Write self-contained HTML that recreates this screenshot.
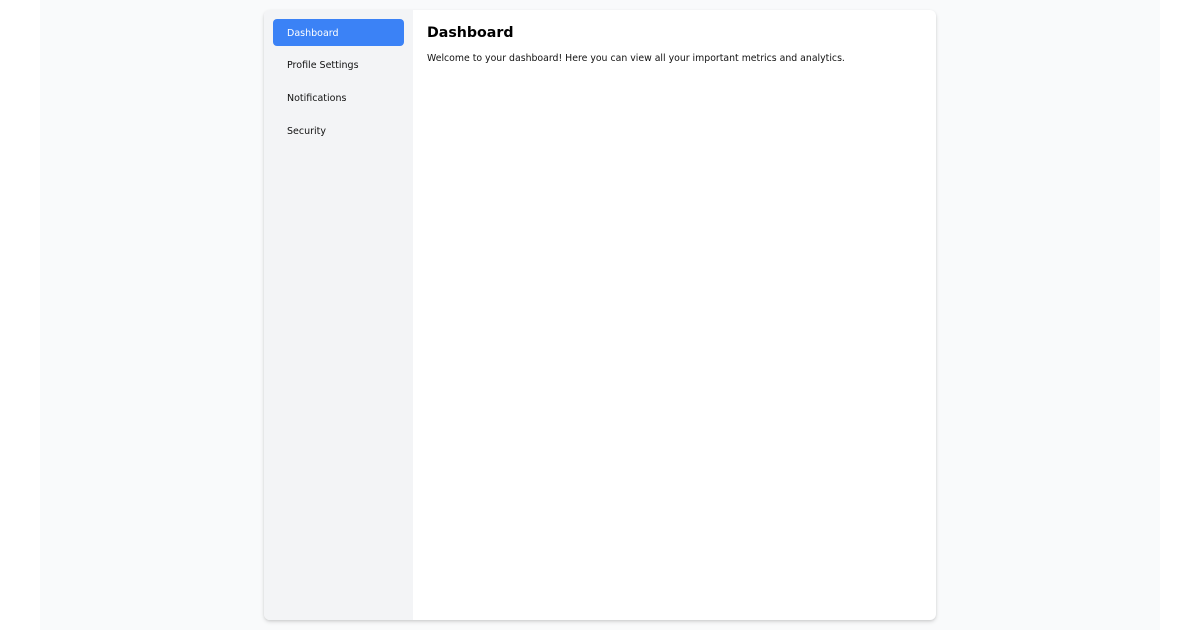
<!DOCTYPE html>
<html><head><meta charset="utf-8"><style>
html,body{margin:0;padding:0;background:#fff;width:1200px;height:630px;overflow:hidden;font-family:"DejaVu Sans","Liberation Sans",sans-serif;}
.bg{position:absolute;left:40px;top:0;width:1120px;height:630px;background:#f9fafb;}
.card{position:absolute;left:264px;top:10px;width:672px;height:610px;background:#fff;border-radius:6px;box-shadow:0 2px 4px rgba(0,0,0,0.12),0 1px 2px rgba(0,0,0,0.08);overflow:hidden;}
.side{position:absolute;left:0;top:0;width:149px;height:611px;background:#f3f4f6;}
.item{position:absolute;left:9px;width:131px;height:27px;line-height:29px;padding-left:14px;box-sizing:border-box;font-size:9.5px;color:#111;border-radius:4px;}
.active{background:#3b82f6;color:#fff;}
h1{position:absolute;left:163px;top:15px;margin:0;font-size:14.2px;font-weight:bold;color:#000;}
p{position:absolute;left:163px;top:43px;margin:0;font-size:9.35px;color:#111;}
</style></head><body>
<div class="bg"></div>
<div class="card">
<div class="side">
<div class="item active" style="top:9px">Dashboard</div>
<div class="item" style="top:41px">Profile Settings</div>
<div class="item" style="top:74px">Notifications</div>
<div class="item" style="top:107px">Security</div>
</div>
<h1>Dashboard</h1>
<p>Welcome to your dashboard! Here you can view all your important metrics and analytics.</p>
</div>
</body></html>
